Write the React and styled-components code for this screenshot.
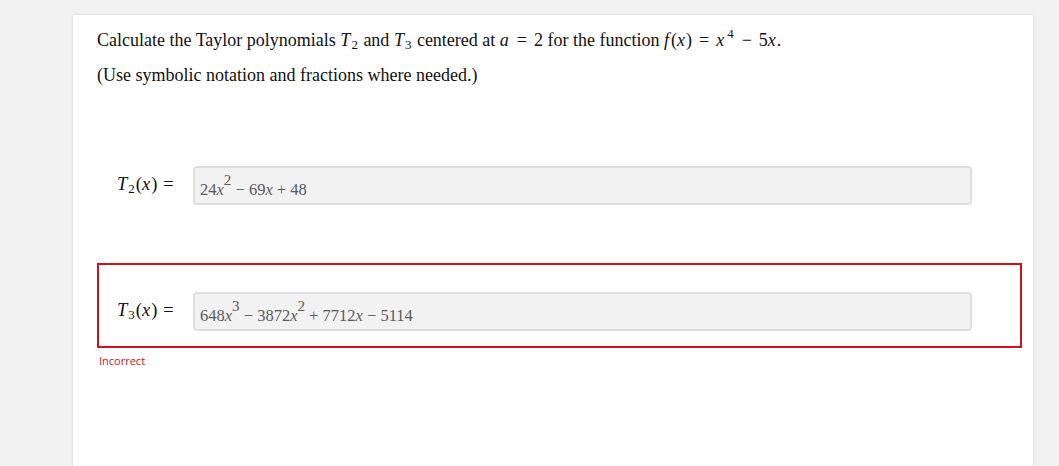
import React from 'react'
import styled, { createGlobalStyle } from 'styled-components'

const Global = createGlobalStyle`
  html, body {
    margin: 0;
    padding: 0;
    background: #f2f2f2;
  }
  body {
    font-family: "Liberation Serif", "Times New Roman", serif;
    overflow: hidden;
  }
`;

const Page = styled.div`
  width: 1059px;
  height: 466px;
  padding: 15px 0 0 73px;
  box-sizing: border-box;
`;

const Card = styled.div`
  width: 960px;
  height: 460px;
  background: #fff;
  box-shadow: 0 0 2px rgba(0, 0, 0, 0.18);
  padding: 14px 11px 0 24px;
  box-sizing: border-box;
`;

const Question = styled.p`
  margin: 0 0 ${p => p.$gap || 0}px;
  font-size: 18px;
  line-height: 22px;
  color: #111;
  white-space: nowrap;
`;

// inline math pieces, MathJax-ish spacing
const M = styled.span`
  font-style: italic;
  margin-right: ${p => p.$r || 1}px;
`;

const Op = styled.span`
  margin: 0 ${p => p.$s || 7}px;
`;

const Sub = styled.sub`
  font-size: 13px;
  line-height: 0;
  vertical-align: -3px;
  margin-right: 1px;
`;

const Sup = styled.sup`
  font-size: 13px;
  line-height: 0;
  vertical-align: 8px;
  margin: 0 1px 0 2px;
`;

const Part = styled.div`
  width: 925px;
  height: 85px;
  box-sizing: border-box;
  border: 2px solid ${p => (p.$wrong ? '#d0111e' : 'transparent')};
  display: flex;
  align-items: flex-start;
  padding: 27px 48px 0 18px;
`;

const Label = styled.div`
  width: 76px;
  flex: none;
  font-size: 18.5px;
  color: #111;
  white-space: nowrap;
  padding-top: 8px;
`;

const Field = styled.div`
  flex: 1;
  height: 39px;
  box-sizing: border-box;
  background: #f2f2f2;
  border: 2px solid #dedede;
  border-radius: 4px;
  padding: 12px 0 0 5px;
  font-size: 16.5px;
  color: #5a5a5a;
  white-space: nowrap;
  i { font-style: italic; }
  sup { font-size: 15px; line-height: 0; vertical-align: 10px; }
`;

const Feedback = styled.div`
  font-family: "Open Sans", "Liberation Sans", sans-serif;
  font-size: 11px;
  color: #d0111e;
  margin: 5px 0 0 2px;
`;

const Spacer = styled.div`
  height: ${p => p.$h}px;
`;

function Row({ label, children, wrong }) {
  return (
    <Part $wrong={wrong}>
      <Label>{label}</Label>
      <Field>{children}</Field>
    </Part>
  );
}

function TLabel({ n }) {
  return (
    <>
      <M>T</M><Sub>{n}</Sub>(<M>x</M>)<Op $s={6}>=</Op>
    </>
  );
}

export default function App() {
  return (
    <>
      <Global />
      <Page>
        <Card>
          <Question $gap={13}>
            Calculate the Taylor polynomials <M>T</M><Sub>2</Sub> and <M>T</M><Sub>3</Sub> centered at <M>a</M><Op>=</Op>2 for the function <M $r={2}>f</M>(<M>x</M>)<Op>=</Op><M>x</M><Sup>4</Sup><Op>−</Op>5<M>x</M>.
          </Question>
          <Question>(Use symbolic notation and fractions where needed.)</Question>
          <Spacer $h={51} />
          <Row label={<TLabel n={2} />}>
            24<i>x</i><sup>2</sup> − 69<i>x</i> + 48
          </Row>
          <Spacer $h={41} />
          <Row wrong label={<TLabel n={3} />}>
            648<i>x</i><sup>3</sup> − 3872<i>x</i><sup>2</sup> + 7712<i>x</i> − 5114
          </Row>
          <Feedback>Incorrect</Feedback>
        </Card>
      </Page>
    </>
  );
}
